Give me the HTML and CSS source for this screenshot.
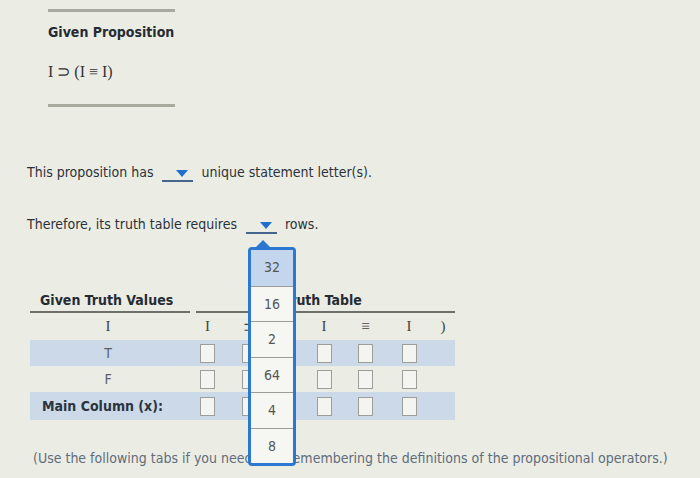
FILE: index.html
```html
<!DOCTYPE html>
<html lang="en">
<head>
    <meta charset="UTF-8">
    <title>Truth Table</title>
    <link rel="stylesheet" href="styles.css">
</head>
<body>
    <div class="page">
        <div class="given">
            <div class="rule"></div>
            <h2>Given Proposition</h2>
            <p class="formula">I ⊃ (I ≡ I)</p>
            <div class="rule"></div>
        </div>

        <p class="line line-one">This proposition has <span class="select"><span class="caret"></span></span> unique statement letter(s).</p>

        <div class="line line-two">Therefore, its truth table requires <span class="select"><span class="caret"></span><span class="menu"><span class="option active">32</span><span class="option">16</span><span class="option">2</span><span class="option">64</span><span class="option">4</span><span class="option">8</span></span></span> rows.</div>

        <div class="truth">
            <div class="truth-head">
                <div class="head-given">Given Truth Values</div>
                <div class="head-table">Truth Table</div>
            </div>
            <div class="truth-row letters">
                <div class="label">I</div>
                <div>I</div><div>⊃</div><div>(</div><div>I</div><div>≡</div><div>I</div><div>)</div>
            </div>
            <div class="truth-row shaded">
                <div class="label value">T</div>
                <div><span class="box"></span></div><div><span class="box"></span></div><div></div>
                <div><span class="box"></span></div><div><span class="box"></span></div><div><span class="box"></span></div><div></div>
            </div>
            <div class="truth-row">
                <div class="label value">F</div>
                <div><span class="box"></span></div><div><span class="box"></span></div><div></div>
                <div><span class="box"></span></div><div><span class="box"></span></div><div><span class="box"></span></div><div></div>
            </div>
            <div class="truth-row shaded main">
                <div class="label main-label">Main Column (x):</div>
                <div><span class="box"></span></div><div><span class="box"></span></div><div></div>
                <div><span class="box"></span></div><div><span class="box"></span></div><div><span class="box"></span></div><div></div>
            </div>
        </div>

        <p class="note">(Use the following tabs if you need help remembering the definitions of the propositional operators.)</p>
    </div>
</body>
</html>
```

FILE: styles.css
```css
* {
    margin: 0;
    padding: 0;
    box-sizing: border-box;
}

body {
    font-family: 'DejaVu Sans Condensed', 'DejaVu Sans', sans-serif;
    font-size: 14px;
    color: #2c3139;
    background: #ebede5;
    height: 478px;
    overflow: hidden;
}

.page {
    padding-left: 27px;
}

.given {
    margin-left: 21px;
    width: 127px;
}

.rule {
    height: 3px;
    background: #a9aa9f;
}

.given .rule:first-child {
    margin-top: 9px;
}

.given h2 {
    margin-top: 11px;
    font-size: 14px;
    line-height: 18px;
    font-weight: bold;
    color: #262b33;
    white-space: nowrap;
}

.formula {
    margin-top: 22px;
    margin-bottom: 23px;
    font-family: 'Liberation Serif', serif;
    font-size: 16px;
    line-height: 18px;
    color: #333;
}

.line {
    line-height: 18px;
}

.line-one {
    margin-top: 56px;
}

.line-two {
    margin-top: 33px;
}

.select {
    display: inline-block;
    position: relative;
    width: 31px;
    height: 16px;
    margin: 0 4px 0 5px;
    border-bottom: 2px solid #45658f;
    vertical-align: -5px;
}

.caret {
    position: absolute;
    left: 14px;
    top: 4px;
    border-left: 6px solid transparent;
    border-right: 6px solid transparent;
    border-top: 7px solid #1f6fce;
}

.menu {
    position: absolute;
    left: 2px;
    top: 29px;
    width: 48px;
    display: block;
    background: #f6f7f3;
    border: 3px solid #2b78d0;
    border-radius: 4px;
    z-index: 5;
}

.menu::before {
    content: '';
    position: absolute;
    left: 5px;
    top: -10px;
    border-left: 7px solid transparent;
    border-right: 7px solid transparent;
    border-bottom: 7px solid #2b78d0;
}

.option {
    display: block;
    height: 35.5px;
    line-height: 34px;
    text-align: center;
    color: #555;
    border-top: 1px solid #9a9c98;
}

.option:first-child {
    border-top: none;
}

.option.active {
    background: #c3d6ee;
}

.truth {
    margin-top: 55px;
    margin-left: 3px;
    width: 425px;
}

.truth-head {
    display: flex;
    gap: 6px;
    font-weight: bold;
    color: #262b33;
}

.head-given,
.head-table {
    height: 24px;
    line-height: 22px;
    border-bottom: 2px solid #6e6f6b;
}

.head-given {
    width: 160px;
    padding-left: 10px;
}

.head-table {
    width: 259px;
    text-align: center;
    padding-right: 6px;
}

.truth-row {
    display: grid;
    grid-template-columns: 156px 43px 40px 35px 40px 43px 44px 24px;
    height: 26px;
    align-items: center;
    text-align: center;
}

.truth-row.letters {
    height: 27px;
    font-family: 'Liberation Serif', serif;
    font-size: 15px;
    color: #444;
}

.truth-row.shaded {
    background: #cbd9e8;
}

.truth-row.main {
    height: 28px;
}

.value {
    color: #5b5f66;
}

.main-label {
    text-align: left;
    padding-left: 12px;
    font-weight: bold;
    color: #2c333d;
}

.box {
    display: inline-block;
    width: 15px;
    height: 19px;
    background: #f4f5f1;
    border: 1px solid #9c9e9a;
    vertical-align: middle;
}

.note {
    margin-top: 29px;
    margin-left: 6px;
    line-height: 18px;
    color: #5f6c7c;
}
```
